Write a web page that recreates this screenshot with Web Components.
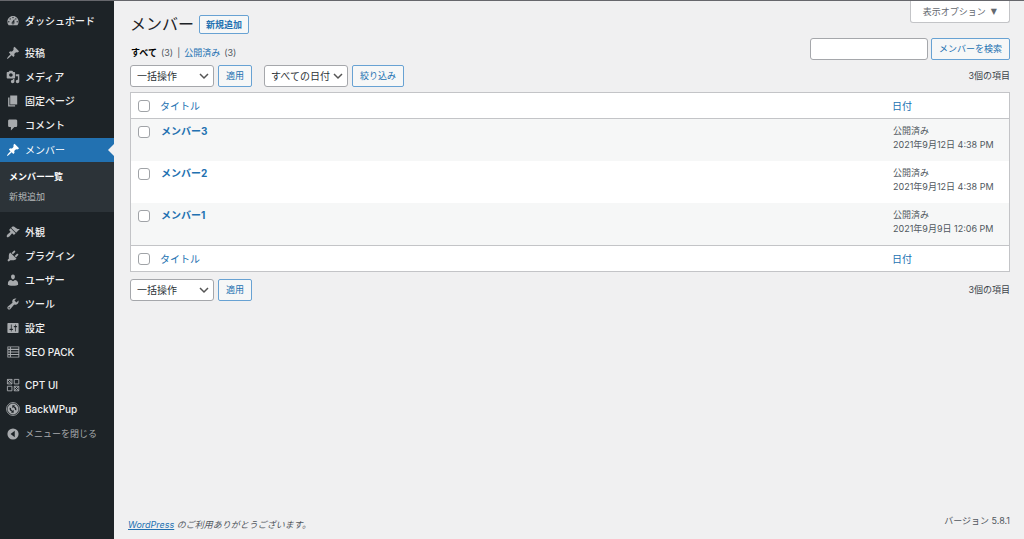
<!DOCTYPE html>
<html lang="ja">
<head>
<meta charset="utf-8">
<meta name="viewport" content="width=device-width, initial-scale=1">
<title>メンバー</title>
<style>
  html { --blue: #2271b1; --line: #c3c4c7; --page: #f0f0f1; --edge: #68a2d3; }
  body {
    margin: 0;
    background: var(--page);
    color: #3c434a;
    font: 400 9px/14px Inter, "Noto Sans CJK JP", sans-serif;
  }
</style>
</head>
<body>
<admin-shell>
  <admin-menu slot="menu">
    <menu-item icon="dashboard" label="ダッシュボード"></menu-item>
    <menu-gap></menu-gap>
    <menu-item icon="pin" label="投稿"></menu-item>
    <menu-item icon="media" label="メディア"></menu-item>
    <menu-item icon="page" label="固定ページ"></menu-item>
    <menu-item icon="comment" label="コメント"></menu-item>
    <menu-item icon="pin" label="メンバー" current>
      <sub-item label="メンバー一覧" current></sub-item>
      <sub-item label="新規追加"></sub-item>
    </menu-item>
    <menu-gap></menu-gap>
    <menu-item icon="brush" label="外観"></menu-item>
    <menu-item icon="plug" label="プラグイン"></menu-item>
    <menu-item icon="user" label="ユーザー"></menu-item>
    <menu-item icon="wrench" label="ツール"></menu-item>
    <menu-item icon="settings" label="設定"></menu-item>
    <menu-item icon="table" label="SEO PACK"></menu-item>
    <menu-gap wide></menu-gap>
    <menu-item icon="cpt" label="CPT UI"></menu-item>
    <menu-item icon="backup" label="BackWPup"></menu-item>
    <menu-collapse></menu-collapse>
  </admin-menu>

  <page-header heading="メンバー" action="新規追加">
    <screen-options slot="side"></screen-options>
    <post-search slot="side" label="メンバーを検索"></post-search>
  </page-header>
  <table-nav filter count="3個の項目"></table-nav>
  <post-table></post-table>
  <table-nav count="3個の項目"></table-nav>
  <page-footer slot="footer" version="バージョン 5.8.1"></page-footer>
</admin-shell>

<script>
const ICONS = {
  dashboard: '<path d="M3.76 16h12.48c1.1-1.37 1.76-3.11 1.76-5 0-4.42-3.58-8-8-8s-8 3.58-8 8c0 1.89.66 3.63 1.76 5zM10 4c.55 0 1 .45 1 1s-.45 1-1 1-1-.45-1-1 .45-1 1-1zM6 6c.55 0 1 .45 1 1s-.45 1-1 1-1-.45-1-1 .45-1 1-1zm8 0c.55 0 1 .45 1 1s-.45 1-1 1-1-.45-1-1 .45-1 1-1zm-5.37 5.55L12 7v6c0 1.1-.9 2-2 2s-2-.9-2-2c0-.57.24-1.08.63-1.45zM4 10c.55 0 1 .45 1 1s-.45 1-1 1-1-.45-1-1 .45-1 1-1zm12 0c.55 0 1 .45 1 1s-.45 1-1 1-1-.45-1-1 .45-1 1-1zm-5 3c0-.55-.45-1-1-1s-1 .45-1 1 .45 1 1 1 1-.45 1-1z"/>',
  pin: '<path d="M10.44 3.02l1.82-1.82 6.36 6.35-1.83 1.82c-1.05-.68-2.48-.57-3.41.36l-.75.75c-.92.93-1.04 2.35-.35 3.41l-1.83 1.82-2.41-2.41-2.8 2.79c-.42.42-3.38 2.71-3.8 2.29s1.86-3.39 2.28-3.81l2.79-2.79L4.1 9.36l1.83-1.82c1.05.69 2.48.57 3.4-.36l.75-.75c.93-.92 1.05-2.35.36-3.41z"/>',
  media: '<path d="M13 11V4c0-.55-.45-1-1-1h-1.67L9 1H5L3.67 3H2c-.55 0-1 .45-1 1v7c0 .55.45 1 1 1h10c.55 0 1-.45 1-1zM7 4.5c1.38 0 2.5 1.12 2.5 2.5S8.38 9.5 7 9.5 4.5 8.38 4.5 7 5.62 4.5 7 4.5zM14 6h5v10.5c0 1.38-1.12 2.5-2.5 2.5S14 17.88 14 16.5s1.12-2.5 2.5-2.5c.17 0 .34.02.5.05V9h-3V6zm-4 8.05V13h2v3.5c0 1.38-1.12 2.5-2.5 2.5S7 17.88 7 16.5 8.12 14 9.5 14c.17 0 .34.02.5.05z" fill-rule="evenodd"/>',
  page: '<path d="M6 15V2h10v13H6zm-1 1h8v2H3V5h2v11z"/>',
  comment: '<path d="M5 2h9c1.1 0 2 .9 2 2v7c0 1.1-.9 2-2 2h-2l-5 5v-5H5c-1.1 0-2-.9-2-2V4c0-1.1.9-2 2-2z"/>',
  brush: '<path d="M14.48 11.06L7.41 3.99l1.5-1.5c.5-.56 2.3-.47 3.51.32 1.21.8 1.43 1.28 2.91 2.1 1.18.64 2.45 1.26 4.45.85zm-.71.71L6.7 4.7 4.93 6.47c-.39.39-.39 1.02 0 1.41l1.06 1.06c.39.39.39 1.03 0 1.42-.6.6-1.43 1.11-2.21 1.69-.35.26-.7.53-1.01.84C1.43 14.23.4 16.08 1.4 17.07c.99 1 2.84-.03 4.18-1.36.31-.31.58-.66.85-1.02.57-.78 1.08-1.61 1.69-2.21.39-.39 1.02-.39 1.41 0l1.06 1.06c.39.39 1.02.39 1.41 0z"/>',
  plug: '<path d="M13.11 4.36L9.87 7.6 8 5.73l3.24-3.24c.35-.34 1.05-.2 1.56.32.52.51.66 1.21.31 1.55zm-8 1.77l.91-1.12 9.01 9.01-1.19.84c-.71.71-2.63 1.16-3.82 1.16H6.14L4.9 17.26c-.59.59-1.54.59-2.12 0-.59-.58-.59-1.53 0-2.12l1.24-1.24v-3.88c0-1.13.4-3.19 1.09-3.89zm7.26 3.97l3.24-3.24c.34-.35 1.04-.21 1.55.31.52.51.66 1.21.31 1.55l-3.24 3.25z"/>',
  user: '<path d="M10 9.25c-2.27 0-2.73-3.44-2.73-3.44C7 4.02 7.82 2 9.97 2c2.16 0 2.98 2.02 2.71 3.81 0 0-.41 3.44-2.68 3.44zm0 2.57L12.72 10c2.39 0 4.52 2.33 4.52 4.53v2.49s-3.65 1.13-7.24 1.13c-3.65 0-7.24-1.13-7.24-1.13v-2.49c0-2.25 1.94-4.48 4.47-4.48z"/>',
  wrench: '<path d="M16.68 9.77c-1.34 1.34-3.3 1.67-4.95.99l-5.41 6.52c-.99.99-2.59.99-3.58 0s-.99-2.59 0-3.57l6.52-5.42c-.68-1.65-.35-3.61.99-4.95 1.28-1.28 3.12-1.62 4.72-1.06l-2.89 2.89 2.82 2.82 2.86-2.87c.53 1.58.18 3.39-1.08 4.65zM3.81 16.21c.4.39 1.04.39 1.43 0 .4-.4.4-1.04 0-1.43-.39-.4-1.03-.4-1.43 0-.39.39-.39 1.03 0 1.43z"/>',
  settings: '<path d="M18 16V4c0-.55-.45-1-1-1H3c-.55 0-1 .45-1 1v12c0 .55.45 1 1 1h14c.55 0 1-.45 1-1zM8 11h1c.55 0 1 .45 1 1s-.45 1-1 1H8v1.5c0 .28-.22.5-.5.5s-.5-.22-.5-.5V13H6c-.55 0-1-.45-1-1s.45-1 1-1h1V5.5c0-.28.22-.5.5-.5s.5.22.5.5V11zm5-2h-1c-.55 0-1-.45-1-1s.45-1 1-1h1V5.5c0-.28.22-.5.5-.5s.5.22.5.5V7h1c.55 0 1 .45 1 1s-.45 1-1 1h-1v5.5c0 .28-.22.5-.5.5s-.5-.22-.5-.5V9z"/>',
  table: '<path fill-rule="evenodd" d="M2 2h17v16H2zM3.300 3.300v2.200h2.200v-2.200zM7 3.300v2.200h10.700v-2.200zM3.300 7v2.300h2.200v-2.300zM7 7v2.300h10.700v-2.300zM3.300 10.700v2.300h2.200v-2.300zM7 10.700v2.300h10.700v-2.300zM3.300 14.400v2.300h2.200v-2.300zM7 14.400v2.300h10.700v-2.300z"/>',
  cpt: '<g fill="none" stroke="currentColor" stroke-width="1.300"><path d="M2 2h6.500v6.500h-6.500zM11.800 2h6.500v6.500h-6.500zM2 11.800h6.500v6.500h-6.500zM11.800 11.800h6.500v6.500h-6.500zM2 2l6.500 6.500M8.500 2l-6.500 6.500M11.800 11.800l6.500 6.500M18.300 11.800l-6.500 6.500"/></g>',
  backup: '<circle cx="10" cy="10" r="9.200" fill="none" stroke="currentColor" stroke-width="1.200"/><path fill-rule="evenodd" d="M10 2.200a7.800 7.800 0 1 0 0 15.600a7.800 7.800 0 1 0 0-15.600zM9 4.500l4 .2-1.400 1.400c2.800 1 3.900 3.700 3 6.200l-1.800-1.200c.2-1.600-.6-3-2.300-3.600l-1.500 1.400zM11 15.500l-4-.2 1.400-1.400c-2.800-1-3.900-3.700-3-6.200l1.800 1.200c-.2 1.600.6 3 2.300 3.600l1.500-1.400z"/>',
  collapse: '<path fill-rule="evenodd" d="M10 2a8 8 0 1 0 0 16a8 8 0 1 0 0-16zM12.500 5.500v9L6.500 10z"/>'
};

const define = (tag, render) => customElements.define(tag, class extends HTMLElement {
  connectedCallback() {
    if (this.shadowRoot) return;
    this.attachShadow({ mode: 'open' }).innerHTML = render(this);
  }
});

const BUTTON = `
  button { box-sizing: border-box; height: 22px; margin: 0; padding: 0 7px; border: 1px solid var(--edge);
    border-radius: 2px; background: #f6f7f7; color: var(--blue); font: inherit; line-height: 20px;
    white-space: nowrap; cursor: pointer; }`;

define('admin-shell', () => `
  <style>
    :host { display: grid; grid-template-columns: 114px minmax(0, 1fr); min-height: 100vh;
      box-sizing: border-box; border-top: 1px solid #66676c; }
    main { display: flex; flex-direction: column; padding: 0 14px 0 16px; }
    footer { margin-top: auto; }
  </style>
  <slot name="menu"></slot>
  <main><slot></slot><footer><slot name="footer"></slot></footer></main>`);

define('admin-menu', () => `
  <style>
    :host { display: block; background: #1d2327; }
    nav { padding-top: 8px; }
  </style>
  <nav aria-label="メインメニュー"><slot></slot></nav>`);

define('menu-gap', () => `<style>:host { display: block; height: 8px; } :host([wide]) { height: 9px; }</style>`);

define('wp-icon', el => `
  <style>
    :host { display: block; width: 14px; height: 14px; flex: none; }
    svg { display: block; width: 100%; height: 100%; }
  </style>
  <svg viewBox="0 0 20 20" fill="currentColor" aria-hidden="true">${ICONS[el.getAttribute('name')]}</svg>`);

define('menu-item', el => `
  <style>
    :host { display: block; }
    :host([current]) { padding-top: 1px; }
    a { position: relative; display: flex; align-items: center; gap: 5px; height: 24px; padding-left: 6px;
      color: #f0f0f1; font-size: 10px; font-weight: 500; text-decoration: none; white-space: nowrap; }
    wp-icon { color: #a7aaad; }
    :host([current]) a { background: var(--blue); color: #fff; font-weight: 400; }
    :host([current]) wp-icon { color: #fff; }
    :host([current]) a::after { content: ""; position: absolute; right: 0; top: 6px;
      border: 6px solid transparent; border-left: 0; border-right: 6px solid var(--page); }
    div { background: #2c3338; padding: 5px 0; }
  </style>
  <a href="#"><wp-icon name="${el.getAttribute('icon')}"></wp-icon>${el.getAttribute('label')}</a>
  ${el.hasAttribute('current') ? '<div><slot></slot></div>' : ''}`);

define('sub-item', el => `
  <style>
    :host { display: block; }
    a { display: block; padding-left: 9px; line-height: 20px; color: #b5b8ba; text-decoration: none; }
    :host([current]) a { color: #fff; font-weight: 600; }
  </style>
  <a href="#">${el.getAttribute('label')}</a>`);

define('menu-collapse', () => `
  <style>
    :host { display: block; }
    button { display: flex; align-items: center; gap: 5px; width: 100%; height: 25px; margin: 0;
      padding: 0 0 0 6px; border: 0; background: none; color: #a7aaad; font: inherit; white-space: nowrap; }
  </style>
  <button type="button"><wp-icon name="collapse"></wp-icon>メニューを閉じる</button>`);

define('page-header', el => `
  <style>
    :host { display: flex; justify-content: space-between; align-items: flex-start; }
    .title { display: flex; align-items: center; gap: 5px; padding-top: 13px; }
    h1 { margin: 0; font-size: 16px; font-weight: 400; line-height: 20px; color: #1d2327; }
    .title a { box-sizing: border-box; height: 19px; padding: 0 6px; border: 1px solid var(--edge);
      border-radius: 2px; background: #f6f7f7; font-weight: 600; line-height: 17px; }
    a { color: var(--blue); text-decoration: none; }
    ul { display: flex; gap: 4px; margin: 12px 0 0; padding: 0 0 0 1px; list-style: none; color: #50575e; }
    li { display: flex; gap: 4px; }
    li a.on { color: #000; font-weight: 600; }
    .side { display: flex; flex-direction: column; align-items: flex-end; gap: 15px; }
  </style>
  <div>
    <div class="title"><h1>${el.getAttribute('heading')}</h1><a href="#">${el.getAttribute('action')}</a></div>
    <ul>
      <li><a href="#" class="on">すべて</a><span>(3)</span></li>
      <li>|</li>
      <li><a href="#">公開済み</a><span>(3)</span></li>
    </ul>
  </div>
  <div class="side"><slot name="side"></slot></div>`);

define('screen-options', () => `
  <style>
    :host { display: block; }
    button { box-sizing: border-box; display: flex; align-items: center; gap: 5px; height: 22px; margin: 0;
      padding: 0 12px; border: 1px solid var(--line); border-top: 0; border-radius: 0 0 3px 3px;
      background: #fff; color: #646970; font: inherit; white-space: nowrap; }
    span { font-family: "DejaVu Sans", sans-serif; font-size: 8px; }
  </style>
  <button type="button">表示オプション<span aria-hidden="true">▼</span></button>`);

define('post-search', el => `
  <style>
    :host { display: flex; gap: 3px; }
    input { box-sizing: border-box; width: 118px; height: 22px; margin: 0; padding: 0 6px;
      border: 1px solid #a5a7ab; border-radius: 3px; background: #fff; font: inherit; }
    ${BUTTON}
  </style>
  <input type="search" aria-label="${el.getAttribute('label')}">
  <button type="button">${el.getAttribute('label')}</button>`);

define('table-nav', el => `
  <style>
    :host { display: flex; justify-content: space-between; padding: 7px 0; }
    :host([filter]) { padding: 5px 0; }
    div { display: flex; gap: 4px; }
    .tools { gap: 12px; }
    select { appearance: none; box-sizing: border-box; width: 84px; height: 22px; margin: 0; padding: 0 16px 0 6px;
      border: 1px solid #a5a7ab; border-radius: 3px; color: #2c3338; font: inherit; font-size: 10px; line-height: 20px;
      background: #fff url('data:image/svg+xml,<svg xmlns="http://www.w3.org/2000/svg" viewBox="0 0 10 10"><path d="M1 3l4 4 4-4" fill="none" stroke="%23555" stroke-width="1.500"/></svg>') no-repeat right 4px center / 10px 10px; }
    ${BUTTON}
    p { margin: 0; line-height: 22px; }
  </style>
  <div class="tools">
    <div><select aria-label="一括操作を選択"><option>一括操作</option></select><button type="button">適用</button></div>
    ${el.hasAttribute('filter') ? '<div><select aria-label="日付で絞り込む"><option>すべての日付</option></select><button type="button">絞り込み</button></div>' : ''}
  </div>
  <p>${el.getAttribute('count')}</p>`);

const MEMBERS = [
  ['メンバー3', '2021年9月12日 4:38 PM'],
  ['メンバー2', '2021年9月12日 4:38 PM'],
  ['メンバー1', '2021年9月9日 12:06 PM']
];
const headRow = `<tr><td class="check"><input type="checkbox" aria-label="すべて選択"></td>
  <th scope="col"><a href="#">タイトル</a></th><th scope="col" class="date"><a href="#">日付</a></th></tr>`;

define('post-table', () => `
  <style>
    :host { display: block; }
    table { box-sizing: border-box; width: 100%; table-layout: fixed; border: 1px solid var(--line);
      border-spacing: 0; background: #fff; }
    th, td { box-sizing: border-box; padding: 0 8px; text-align: left; font-weight: inherit; }
    th { height: 26px; padding: 0 7px; font-size: 10px; }
    thead th, thead td { border-bottom: 1px solid var(--line); }
    tfoot th, tfoot td { border-top: 1px solid var(--line); }
    tbody td { height: 42px; padding-top: 5px; vertical-align: top; }
    tbody tr:nth-child(odd) { background: #f6f7f7; }
    td.check { width: 22px; padding-left: 7px; padding-right: 0; line-height: 0; }
    tbody td.check { padding-top: 7px; }
    .date { width: 124px; }
    td.date { color: #50575e; }
    a { color: var(--blue); text-decoration: none; }
    strong { font-size: 10px; font-weight: 700; }
    input { appearance: none; box-sizing: border-box; width: 12px; height: 12px; margin: 0;
      border: 1px solid #a0a3a7; border-radius: 3px; background: #fff; }
  </style>
  <table>
    <thead>${headRow}</thead>
    <tbody>${MEMBERS.map(([name, date]) => `<tr>
      <td class="check"><input type="checkbox" aria-label="${name}を選択"></td>
      <td><strong><a href="#">${name}</a></strong></td>
      <td class="date">公開済み<br>${date}</td></tr>`).join('')}</tbody>
    <tfoot>${headRow}</tfoot>
  </table>`);

define('page-footer', el => `
  <style>
    :host { display: flex; justify-content: space-between; align-items: flex-start; margin-left: -2px;
      padding-bottom: 7px; color: #50575e; }
    p { margin: 0; }
    .thanks { padding-top: 4px; font-style: italic; }
    a { color: var(--blue); }
  </style>
  <p class="thanks"><a href="#">WordPress</a> のご利用ありがとうございます。</p>
  <p>${el.getAttribute('version')}</p>`);
</script>
</body>
</html>
